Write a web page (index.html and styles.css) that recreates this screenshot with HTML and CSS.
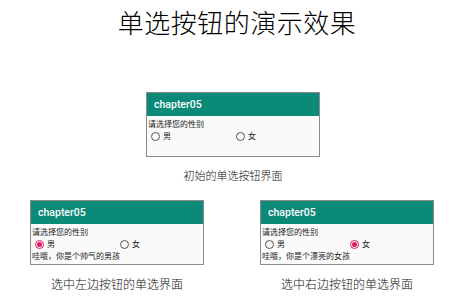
FILE: index.html
```html
<!DOCTYPE html>
<html lang="zh-CN">
<head>
  <meta charset="UTF-8" />
  <title>单选按钮的演示效果</title>
  <link rel="stylesheet" href="styles.css">
</head>
<body>
  <h1 class="title">单选按钮的演示效果</h1>

  <div class="row row-top">
    <div class="figure">
      <div class="phone">
        <div class="bar">chapter05</div>
        <div class="screen">
          <div class="ask">请选择您的性别</div>
          <div class="radios">
            <span class="radio"><i class="dot"></i>男</span>
            <span class="radio"><i class="dot"></i>女</span>
          </div>
        </div>
      </div>
      <p class="caption">初始的单选按钮界面</p>
    </div>
  </div>

  <div class="row row-bottom">
    <div class="figure">
      <div class="phone">
        <div class="bar">chapter05</div>
        <div class="screen">
          <div class="ask">请选择您的性别</div>
          <div class="radios">
            <span class="radio"><i class="dot on"></i>男</span>
            <span class="radio"><i class="dot"></i>女</span>
          </div>
          <div class="msg">哇哦，你是个帅气的男孩</div>
        </div>
      </div>
      <p class="caption">选中左边按钮的单选界面</p>
    </div>
    <div class="figure">
      <div class="phone">
        <div class="bar">chapter05</div>
        <div class="screen">
          <div class="ask">请选择您的性别</div>
          <div class="radios">
            <span class="radio"><i class="dot"></i>男</span>
            <span class="radio"><i class="dot on"></i>女</span>
          </div>
          <div class="msg">哇哦，你是个漂亮的女孩</div>
        </div>
      </div>
      <p class="caption">选中右边按钮的单选界面</p>
    </div>
  </div>
</body>
</html>
```

FILE: styles.css
```css
body {
  margin: 0;
  background: #ffffff;
  color: #111;
  font-family: "Noto Sans CJK SC", sans-serif;
}
.title {
  margin: 7px 0 0;
  height: 29px;
  font-size: 26px;
  line-height: 29px;
  font-weight: 300;
  color: #000;
  text-align: center;
  letter-spacing: 0.5px;
}
.row {
  display: flex;
}
.row-top {
  margin-top: 56px;
  padding-left: 146px;
}
.row-bottom {
  margin-top: 18px;
  padding-left: 30px;
  gap: 56px;
}
.figure {
  width: 174px;
}
.phone {
  border: 1px solid #8c8c8c;
  background: #fafafa;
}
.bar {
  height: 23px;
  line-height: 23px;
  padding-left: 7px;
  background: #0a8a77;
  color: #ffffff;
  font-family: Roboto, "Noto Sans", sans-serif;
  font-weight: 500;
  font-size: 10.5px;
}
.screen {
  height: 40px;
  padding-top: 3px;
  box-sizing: border-box;
  font-size: 8px;
  color: #222;
}
.ask {
  height: 10px;
  line-height: 10px;
  padding-left: 1px;
}
.radios {
  display: grid;
  grid-template-columns: 85px 1fr;
  height: 14px;
  padding-left: 4px;
}
.radio {
  display: flex;
  align-items: center;
  gap: 3px;
  line-height: 14px;
}
.dot {
  width: 9px;
  height: 9px;
  border: 1px solid #555;
  border-radius: 50%;
  box-sizing: border-box;
  display: flex;
  align-items: center;
  justify-content: center;
}
.dot.on {
  border-color: #d81b60;
}
.dot.on::after {
  content: "";
  width: 5px;
  height: 5px;
  border-radius: 50%;
  background: #d81b60;
}
.msg {
  height: 10px;
  line-height: 10px;
  padding-left: 1px;
}
.caption {
  margin: 11px 0 0;
  font-size: 11px;
  line-height: 14px;
  font-weight: 300;
  color: #111;
  text-align: center;
}
.row-bottom .caption {
  font-size: 12px;
  margin-top: 12px;
}
```
